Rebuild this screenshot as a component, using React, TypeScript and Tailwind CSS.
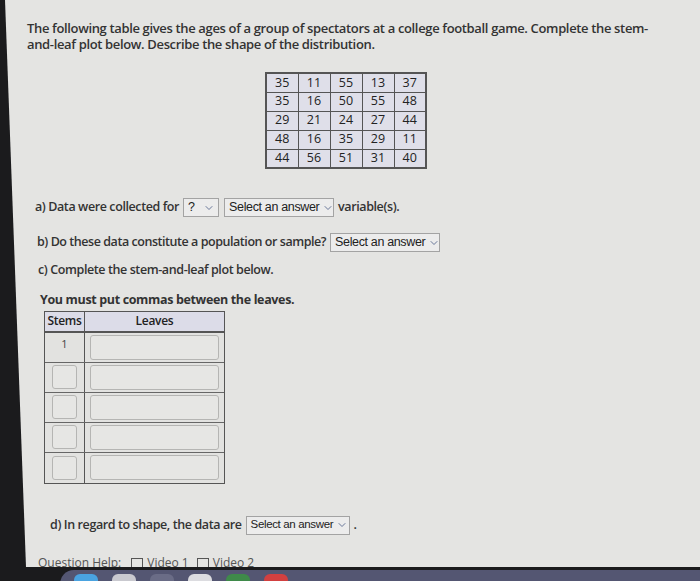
import { ChevronDown } from 'lucide-react';

const font = { fontFamily: '"Open Sans", "Liberation Sans", sans-serif' };

const data = [
  [35, 11, 55, 13, 37],
  [35, 16, 50, 55, 48],
  [29, 21, 24, 27, 44],
  [48, 16, 35, 29, 11],
  [44, 56, 51, 31, 40],
];

const Select = ({ label, w, size = 'text-[12.5px]' }: { label: string; w: string; size?: string }) => (
  <span
    className={`inline-flex items-center justify-between gap-[3px] whitespace-nowrap h-[19px] ${w} ${size} border border-[#a3a3a3] bg-[#ececec] pl-[4px] pr-[3px] font-normal text-[#222] tracking-[-0.35px]`}
    style={{ fontFamily: '"Liberation Sans", Arial, sans-serif' }}
  >
    <span>{label}</span>
    <ChevronDown size={12} strokeWidth={1.8} className="text-[#5a6a90] shrink-0" />
  </span>
);

export default function App() {
  return (
    <div className="relative w-[700px] h-[581px] overflow-hidden bg-[#1b1b1d]">
      <div
        className="h-[567px] bg-[#e4e4e2] rounded-bl-[18px] [clip-path:polygon(5px_0,100%_0,100%_100%,26px_100%)] text-[#333] font-semibold"
        style={font}
      >
        <div className="pt-[20px] pl-[27px] pr-[40px] text-[13px] leading-[16px] tracking-[-0.35px]">
          The following table gives the ages of a group of spectators at a college football game. Complete the stem-
          and-leaf plot below. Describe the shape of the distribution.
        </div>

        <div className="flex pl-[265px] mt-[20px]">
          <table className="border-collapse border-2 border-[#555] bg-[#dfdfe9] text-[12.5px] font-normal text-[#222]">
            <tbody>
              {data.map((row, i) => (
                <tr key={i}>
                  {row.map((v, j) => (
                    <td key={j} className="border border-[#555] w-[32px] h-[19px] text-center leading-none p-0">
                      {v}
                    </td>
                  ))}
                </tr>
              ))}
            </tbody>
          </table>
        </div>

        <div className="pl-[35px] mt-[29px] text-[12.5px] tracking-[-0.4px] flex items-center gap-[4px]">
          <span>a) Data were collected for</span>
          <Select label="?" w="w-[36px]" />
          <Select label="Select an answer" w="w-[110px] ml-[1px]" />
          <span>variable(s).</span>
        </div>

        <div className="pl-[37px] mt-[16px] text-[12.5px] tracking-[-0.45px] flex items-center gap-[4px]">
          <span>b) Do these data constitute a population or sample?</span>
          <Select label="Select an answer" w="w-[110px]" />
        </div>

        <div className="pl-[38px] mt-[9px] text-[12.5px] tracking-[-0.4px]">c) Complete the stem-and-leaf plot below.</div>

        <div className="pl-[40px] mt-[11px] text-[12.5px] tracking-[-0.35px] font-bold">
          You must put commas between the leaves.
        </div>

        <div className="pl-[44px] mt-[1px]">
          <div className="w-[181px] border border-[#555] bg-[#e2e2e0]">
            <div className="flex h-[21px] bg-[#dcdce8] border-b-2 border-[#555] text-[12px] font-semibold text-[#222] tracking-[-0.3px]">
              <div className="w-[40px] border-r border-[#555] flex items-center justify-center">Stems</div>
              <div className="flex-1 flex items-center justify-center">Leaves</div>
            </div>
            {[0, 1, 2, 3, 4].map((i) => (
              <div key={i} className={`flex h-[30px] ${i < 4 ? 'border-b border-[#666]' : ''}`}>
                <div className="w-[40px] border-r border-[#555] flex items-center justify-center">
                  {i === 0 ? (
                    <span className="text-[11px] font-normal text-[#444] -mt-[6px]">1</span>
                  ) : (
                    <div className="w-[25px] h-[24px] rounded-[3px] border border-[#b5b5b3] bg-[#e6e6e4]" />
                  )}
                </div>
                <div className="flex-1 flex items-center px-[5px]">
                  <div className="w-full h-[25px] rounded-[3px] border border-[#b5b5b3] bg-[#e6e6e4]" />
                </div>
              </div>
            ))}
          </div>
        </div>

        <div className="pl-[50px] mt-[32px] text-[12.5px] tracking-[-0.4px] flex items-center gap-[4px]">
          <span>d) In regard to shape, the data are</span>
          <Select label="Select an answer" w="w-[104px]" size="text-[11.5px]" />
          <span>.</span>
        </div>

        <div className="pl-[38px] mt-[19px] text-[12px] font-normal text-[#555] flex items-center gap-[4px]">
          <span className="underline">Question Help:</span>
          <span className="inline-block w-[12px] h-[10px] border border-[#555] ml-[6px]" />
          <span>Video 1</span>
          <span className="inline-block w-[12px] h-[10px] border border-[#555] ml-[4px]" />
          <span>Video 2</span>
        </div>
      </div>

      <div className="absolute left-[60px] top-[570px] w-[700px] h-[20px] rounded-tl-[14px] bg-[#545672] flex gap-[14px] pl-[14px] pt-[4px]">
        <div className="w-[24px] h-[14px] rounded-t-[6px] bg-[#4aa3e0]" />
        <div className="w-[24px] h-[14px] rounded-t-[6px] bg-[#c9c9cf]" />
        <div className="w-[24px] h-[14px] rounded-t-[6px] bg-[#6a6c86]" />
        <div className="w-[24px] h-[14px] rounded-t-[6px] bg-[#dcdce0]" />
        <div className="w-[24px] h-[14px] rounded-t-[6px] bg-[#3f8a4a]" />
        <div className="w-[24px] h-[14px] rounded-t-[6px] bg-[#d24040]" />
      </div>
    </div>
  );
}
